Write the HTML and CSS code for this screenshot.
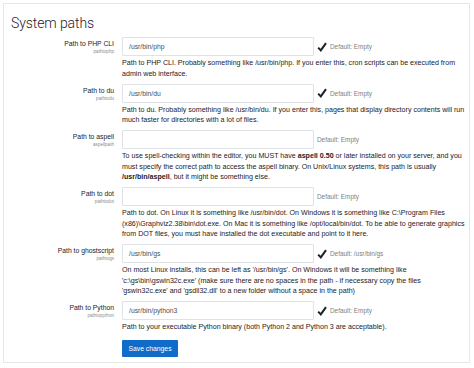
FILE: index.html
```html
<!DOCTYPE html>
<html>
<head>
<meta charset="utf-8">
<link rel="stylesheet" href="styles.css">
</head>
<body>
<div class="card">
  <h2 class="title">System paths</h2>
  <div class="rows">
    <div class="row">
      <div class="label"><div class="name">Path to PHP CLI</div><div class="key">pathtophp</div></div>
      <div class="field">
        <div class="line"><div class="input">/usr/bin/php</div><svg class="check" viewBox="0 0 10 10"><path d="M1.2 5.6 L3.8 8.4 L9 1.2" /></svg><span class="def">Default: Empty</span></div>
        <div class="desc">Path to PHP CLI. Probably something like /usr/bin/php. If you enter this, cron scripts can be executed from admin web interface.</div>
      </div>
    </div>
    <div class="row">
      <div class="label"><div class="name">Path to du</div><div class="key">pathtodu</div></div>
      <div class="field">
        <div class="line"><div class="input">/usr/bin/du</div><svg class="check" viewBox="0 0 10 10"><path d="M1.2 5.6 L3.8 8.4 L9 1.2" /></svg><span class="def">Default: Empty</span></div>
        <div class="desc">Path to du. Probably something like /usr/bin/du. If you enter this, pages that display directory contents will run much faster for directories with a lot of files.</div>
      </div>
    </div>
    <div class="row">
      <div class="label"><div class="name">Path to aspell</div><div class="key">aspellpath</div></div>
      <div class="field">
        <div class="line"><div class="input"></div><span class="def nocheck">Default: Empty</span></div>
        <div class="desc">To use spell-checking within the editor, you MUST have <b>aspell 0.50</b> or later installed on your server, and you must specify the correct path to access the aspell binary. On Unix/Linux systems, this path is usually <b>/usr/bin/aspell</b>, but it might be something else.</div>
      </div>
    </div>
    <div class="row">
      <div class="label"><div class="name">Path to dot</div><div class="key">pathtodot</div></div>
      <div class="field">
        <div class="line"><div class="input"></div><span class="def nocheck">Default: Empty</span></div>
        <div class="desc">Path to dot. On Linux it is something like /usr/bin/dot. On Windows it is something like C:\Program Files (x86)\Graphviz2.38\bin\dot.exe. On Mac it is something like /opt/local/bin/dot. To be able to generate graphics from DOT files, you must have installed the dot executable and point to it here.</div>
      </div>
    </div>
    <div class="row">
      <div class="label"><div class="name">Path to ghostscript</div><div class="key">pathtogs</div></div>
      <div class="field">
        <div class="line"><div class="input">/usr/bin/gs</div><svg class="check" viewBox="0 0 10 10"><path d="M1.2 5.6 L3.8 8.4 L9 1.2" /></svg><span class="def">Default: /usr/bin/gs</span></div>
        <div class="desc">On most Linux installs, this can be left as '/usr/bin/gs'. On Windows it will be something like 'c:\gs\bin\gswin32c.exe' (make sure there are no spaces in the path - if necessary copy the files 'gswin32c.exe' and 'gsdll32.dll' to a new folder without a space in the path)</div>
      </div>
    </div>
    <div class="row">
      <div class="label"><div class="name">Path to Python</div><div class="key">pathtopython</div></div>
      <div class="field">
        <div class="line"><div class="input">/usr/bin/python3</div><svg class="check" viewBox="0 0 10 10"><path d="M1.2 5.6 L3.8 8.4 L9 1.2" /></svg><span class="def">Default: Empty</span></div>
        <div class="desc">Path to your executable Python binary (both Python 2 and Python 3 are acceptable).</div>
      </div>
    </div>
    <div class="row">
      <div></div>
      <div class="field"><button class="save">Save changes</button></div>
    </div>
  </div>
</div>
</body>
</html>
```
FILE: styles.css
```css
html, body {
  margin: 0;
  padding: 0;
  background: #ffffff;
}
body {
  font-family: "Liberation Sans", Arial, sans-serif;
  color: #1d2125;
}
.card {
  margin: 3px 4px 3px 3px;
  height: 360px;
  box-sizing: border-box;
  border: 1px solid #e6e6e6;
  padding: 10px 0 0 7px;
}
.title {
  margin: 0 0 5px 0;
  font-family: Roboto, "Liberation Sans", sans-serif;
  font-size: 14px;
  line-height: 18px;
  font-weight: 300;
  letter-spacing: -0.1px;
  color: #1d2125;
}
.rows {
  display: flex;
  flex-direction: column;
  gap: 4.5px;
}
.row {
  display: grid;
  grid-template-columns: 103px 1fr;
  column-gap: 8px;
}
.label {
  text-align: right;
  padding-top: 2px;
}
.name {
  font-size: 6.8px;
  line-height: 10px;
  color: #1d2125;
}
.key {
  font-size: 4.6px;
  line-height: 6px;
  color: #8a8f94;
}
.line {
  display: flex;
  align-items: center;
  height: 19px;
}
.input {
  box-sizing: border-box;
  width: 192px;
  height: 19px;
  border: 1px solid #dfe2e6;
  border-radius: 1px;
  padding: 0 6px;
  font-size: 6.8px;
  line-height: 17px;
  color: #495057;
  background: #fff;
}
.check {
  width: 10px;
  height: 10px;
  margin-left: 3px;
  fill: none;
  stroke: #1d2125;
  stroke-width: 2;
  stroke-linecap: butt;
  stroke-linejoin: miter;
}
.def {
  font-size: 6.4px;
  color: #7a8086;
  margin-left: 3px;
}
.def.nocheck {
  margin-left: 3px;
}
.desc {
  margin-top: 2px;
  padding-right: 4px;
  font-size: 7.1px;
  line-height: 10.5px;
  color: #1d2125;
}
.desc b {
  font-weight: bold;
}
.save {
  margin-top: 0;
  width: 56px;
  height: 17px;
  padding: 0;
  border: 0;
  border-radius: 1px;
  background: #0f6cc8;
  color: #fff;
  font-family: "Liberation Sans", Arial, sans-serif;
  font-size: 6.8px;
}
```
